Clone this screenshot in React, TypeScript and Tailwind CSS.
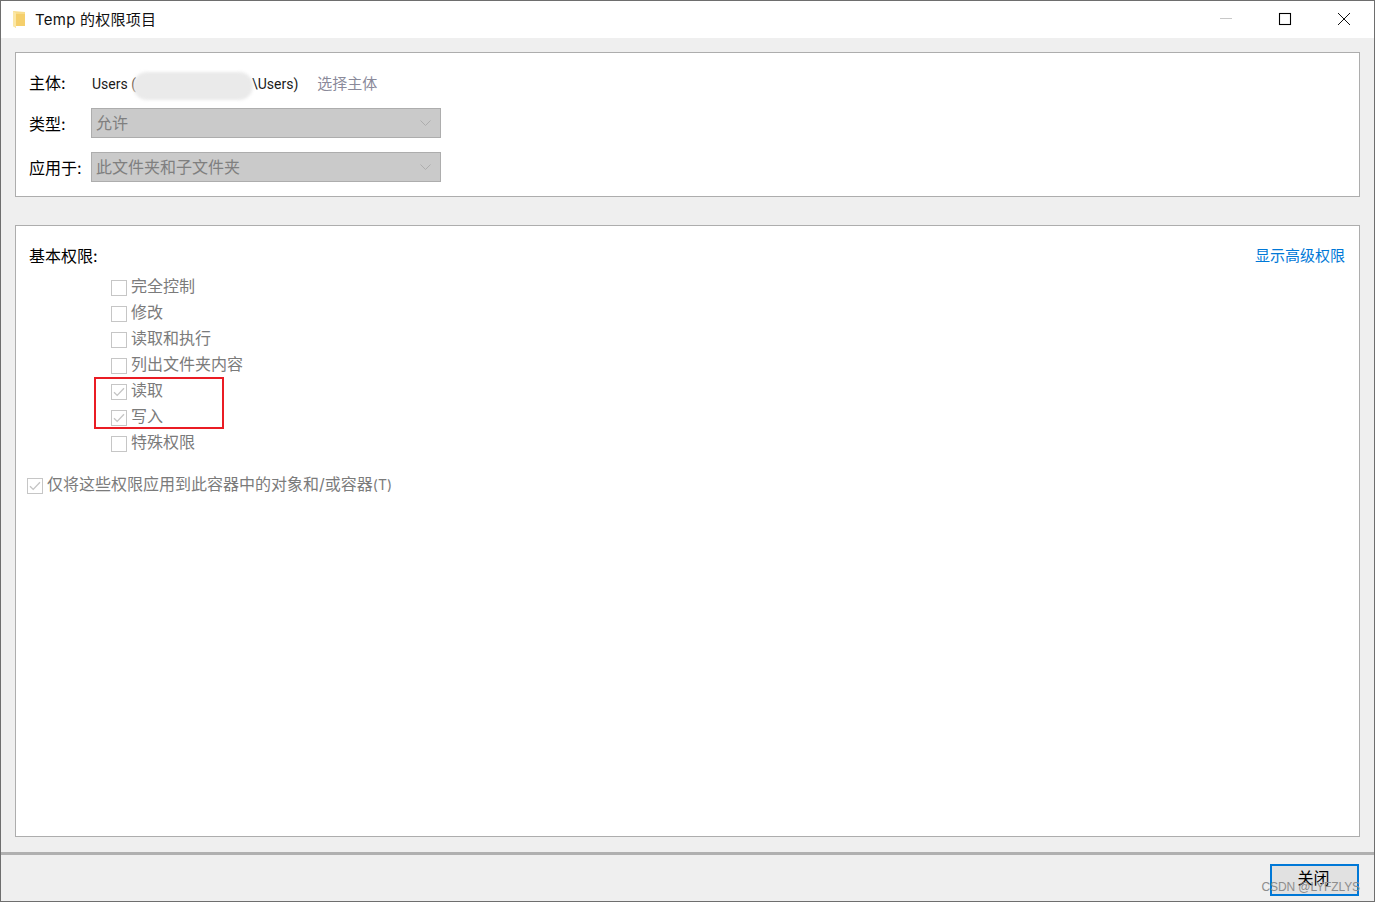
const FONT = "font-['Segoe_UI','Inter','Noto_Sans_CJK_SC',sans-serif]";

const permissions = [
  { label: "完全控制", checked: false },
  { label: "修改", checked: false },
  { label: "读取和执行", checked: false },
  { label: "列出文件夹内容", checked: false },
  { label: "读取", checked: true },
  { label: "写入", checked: true },
  { label: "特殊权限", checked: false },
];

function Check({ checked }: { checked: boolean }) {
  return (
    <span className="relative top-[1px] w-4 h-4 shrink-0 border border-[#c6c6c6] bg-white flex items-center justify-center">
      {checked && (
        <svg width="12" height="10" viewBox="0 0 12 10" fill="none">
          <path d="M1 5.2 L4.2 8.4 L11 1.2" stroke="#c4c4c4" strokeWidth="1.3" />
        </svg>
      )}
    </span>
  );
}

function Select({ value }: { value: string }) {
  return (
    <div className="w-[350px] h-[30px] border border-[#adadad] bg-[#cacaca] flex items-center justify-between pl-[4px] pr-[9px] text-[16px] text-[#7f7f7f]">
      <span>{value}</span>
      <svg width="11" height="6" viewBox="0 0 11 6" fill="none">
        <path d="M0.5 0.5 L5.5 5.5 L10.5 0.5" stroke="#adadad" strokeWidth="1" />
      </svg>
    </div>
  );
}

export default function App() {
  return (
    <div className={`relative w-[1375px] h-[902px] overflow-hidden flex flex-col border border-[#6e6e6e] bg-[#efefef] text-black ${FONT}`}>
      {/* Title bar */}
      <div className="h-[37px] shrink-0 bg-white flex items-center pl-[12px]">
        <svg width="13" height="18" viewBox="0 0 13 18" className="shrink-0">
          <path d="M0 0 L12 1 V15 H3 V17 L0 15 Z" fill="#f8dd8c" />
          <path d="M3 3 H12 V15 H3 Z" fill="#f5cf6b" />
          <path d="M0 0 L3 2 V17 L0 15 Z" fill="#fbe7a6" />
        </svg>
        <span className="ml-[9px] relative top-[1px] text-[15px] tracking-[0.25px] text-[#111]">Temp 的权限项目</span>
        <div className="ml-auto flex items-center">
          <svg width="59" height="37" viewBox="0 0 59 37" fill="none">
            <path d="M23 17.5 H35" stroke="#c8c8c8" />
          </svg>
          <svg width="59" height="37" viewBox="0 0 59 37" fill="none">
            <rect x="23.5" y="12.5" width="11" height="11" stroke="#000" strokeWidth="1.1" />
          </svg>
          <svg width="59" height="37" viewBox="0 0 59 37" fill="none">
            <path d="M23 12 L35 24 M35 12 L23 24" stroke="#111" strokeWidth="1" />
          </svg>
        </div>
      </div>

      {/* Content */}
      <div className="flex-1 flex flex-col pt-[14px] px-[14px]">
        <div className="h-[145px] shrink-0 border border-[#adadad] bg-white pl-[13px] pt-[20px] flex flex-col text-[16px]">
          <div className="h-[22px] flex items-center">
            <span className="relative -top-[1px] w-[63px]">主体:</span>
            <span className="font-['Roboto',sans-serif] text-[14px] text-[#1a1a1a]">
              <span>Users (</span>
              <span className="inline-block w-[116px]" />
              <span>\Users)</span>
            </span>
            <span className="ml-[19px] text-[15px] text-[#8a8a9a]">选择主体</span>
          </div>
          <div className="mt-[13px] flex items-center">
            <span className="relative top-[1px] w-[62px]">类型:</span>
            <Select value="允许" />
          </div>
          <div className="mt-[14px] flex items-center">
            <span className="relative top-[1px] w-[62px]">应用于:</span>
            <Select value="此文件夹和子文件夹" />
          </div>
        </div>

        <div className="h-[612px] shrink-0 mt-[28px] border border-[#adadad] bg-white pl-[13px] pr-[14px] pt-[19px]">
          <div className="flex items-center justify-between h-[22px] text-[16px]">
            <span>基本权限:</span>
            <span className="text-[15px] text-[#0078d7]">显示高级权限</span>
          </div>
          <div className="mt-[7px] ml-[82px] flex flex-col">
            {permissions.map((p) => (
              <div key={p.label} className="h-[26px] flex items-center gap-[4px] text-[16px] leading-none text-[#7b7b7b]">
                <Check checked={p.checked} />
                <span className="relative -top-[1px]">{p.label}</span>
              </div>
            ))}
          </div>
          <div className="mt-[16px] -ml-[2px] h-[26px] flex items-center gap-[4px] text-[16px] leading-none text-[#7b7b7b]">
            <Check checked />
            <span className="relative -top-[1px]">
              仅将这些权限应用到此容器中的对象和/或容器<span className="text-[14px]">(T)</span>
            </span>
          </div>
        </div>
      </div>

      {/* Footer */}
      <div className="h-[49px] shrink-0 border-t-[3px] border-[#b0b0b0] flex items-start justify-end pt-[9px] pr-[15px]">
        <button className="w-[89px] h-[32px] border-2 border-[#0078d7] bg-[#e1e1e1] pb-[5px] pr-[2px] text-[16px] leading-none text-black">
          关闭
        </button>
      </div>

      {/* Smudge over the account name */}
      <div className="absolute left-[132px] top-[71px] w-[120px] h-[28px] rounded-[14px] bg-[#eaeaea] blur-[1.5px]" />
      {/* Red annotation */}
      <div className="absolute left-[93px] top-[376px] w-[130px] h-[52px] border-2 border-[#ea1c24]" />
      {/* Watermark */}
      <span className="absolute right-[14px] top-[879px] font-['Liberation_Sans',sans-serif] text-[12px] leading-[14px] tracking-[-0.1px] text-[#8d8d8d]">CSDN @LYFZLYS</span>
    </div>
  );
}
